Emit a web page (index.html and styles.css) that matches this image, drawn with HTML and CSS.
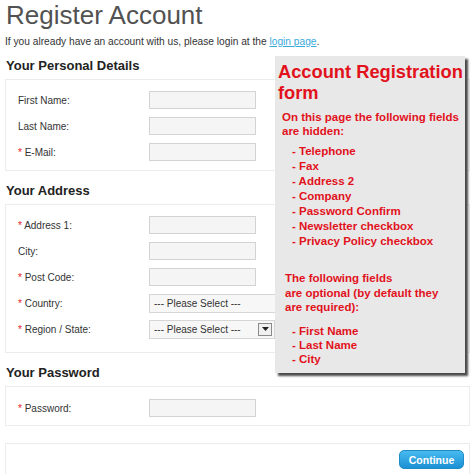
FILE: index.html
```html
<!DOCTYPE html>
<html>
<head>
<meta charset="utf-8">
<title>Register Account</title>
<link rel="stylesheet" href="styles.css">
</head>
<body>
<div class="page">
  <h1 class="title">Register Account</h1>
  <p class="intro">If you already have an account with us, please login at the <a class="link" href="#">login page</a>.</p>

  <h2 class="section-title section-title--first">Your Personal Details</h2>
  <div class="box">
    <div class="row"><span class="label">First Name:</span><span class="field"></span></div>
    <div class="row"><span class="label">Last Name:</span><span class="field"></span></div>
    <div class="row"><span class="label"><span class="req">*</span> E-Mail:</span><span class="field"></span></div>
  </div>

  <h2 class="section-title">Your Address</h2>
  <div class="box box--address">
    <div class="row"><span class="label"><span class="req">*</span> Address 1:</span><span class="field"></span></div>
    <div class="row"><span class="label">City:</span><span class="field"></span></div>
    <div class="row"><span class="label"><span class="req">*</span> Post Code:</span><span class="field"></span></div>
    <div class="row"><span class="label"><span class="req">*</span> Country:</span><span class="select select--wide"><span class="select-text">--- Please Select ---</span></span></div>
    <div class="row"><span class="label"><span class="req">*</span> Region / State:</span><span class="select"><span class="select-text">--- Please Select ---</span><span class="select-arrow"><svg width="7" height="4" viewBox="0 0 7 4"><path d="M0 0 L7 0 L3.5 4 Z" fill="#222"/></svg></span></span></div>
  </div>

  <h2 class="section-title">Your Password</h2>
  <div class="box box--password">
    <div class="row"><span class="label"><span class="req">*</span> Password:</span><span class="field"></span></div>
  </div>

  <div class="box box--actions">
    <button class="btn" type="button">Continue</button>
  </div>

  <div class="note">
    <div class="note-title">Account Registration<br>form</div>
    <p class="note-text">On this page the following fields<br>are hidden:</p>
    <ul class="note-list">
      <li>- Telephone</li>
      <li>- Fax</li>
      <li>- Address 2</li>
      <li>- Company</li>
      <li>- Password Confirm</li>
      <li>- Newsletter checkbox</li>
      <li>- Privacy Policy checkbox</li>
    </ul>
    <p class="note-text note-text--second">The following fields<br>are optional (by default they<br>are required):</p>
    <ul class="note-list note-list--second">
      <li>- First Name</li>
      <li>- Last Name</li>
      <li>- City</li>
    </ul>
  </div>
</div>
</body>
</html>
```

FILE: styles.css
```css
html, body {
  margin: 0;
  padding: 0;
  background: #ffffff;
}

body {
  font-family: "Liberation Sans", Arial, sans-serif;
  color: #333333;
  overflow: hidden;
}

.page {
  position: relative;
  width: 465px;
  padding-left: 5px;
  height: 474px;
}

.title {
  margin: 0 0 0 1px;
  font-size: 26px;
  line-height: 30px;
  font-weight: normal;
  color: #525252;
}

.intro {
  margin: 5px 0 0 0;
  font-size: 10.2px;
  line-height: 14px;
  color: #333333;
}

.link {
  color: #3aa9dc;
  text-decoration: underline;
}

.section-title {
  margin: 12px 0 5px 1px;
  font-size: 13px;
  line-height: 16px;
  font-weight: bold;
  color: #222222;
}

.section-title--first {
  margin-top: 9px;
}

.box {
  border: 1px solid #ececec;
  padding: 7px 0 5px 11px;
}

.box--address {
  padding-bottom: 10px;
}

.box--password {
  padding-top: 8px;
  padding-bottom: 4px;
}

.box--actions {
  margin-top: 17px;
  padding: 6px 5px 12px 0;
  display: flex;
  justify-content: flex-end;
}

.row {
  display: flex;
  align-items: center;
  height: 26px;
}

.label {
  width: 131px;
  font-size: 10px;
  color: #333333;
  padding-left: 1px;
}

.req {
  color: #e31b1b;
}

.field {
  display: block;
  width: 105px;
  height: 16px;
  border: 1px solid #d3d3d3;
  background: #f5f5f5;
}

.select {
  display: flex;
  align-items: center;
  justify-content: space-between;
  box-sizing: border-box;
  width: 126px;
  height: 19px;
  border: 1px solid #d6d6d6;
  background: #f7f7f7;
  padding: 0 2px 0 4px;
}

.select--wide {
  width: 150px;
}

.select-text {
  font-size: 10px;
  color: #333333;
}

.select-arrow {
  display: flex;
  align-items: center;
  justify-content: center;
  width: 12px;
  height: 11px;
  border: 1px solid #8a8a8a;
  background: #f0f0f0;
}

.btn {
  width: 65px;
  height: 19px;
  border: 1px solid #1f8cc8;
  border-radius: 5px;
  background: linear-gradient(#47baf0, #1b91d4);
  color: #ffffff;
  font-family: "Liberation Sans", Arial, sans-serif;
  font-size: 10.5px;
  font-weight: bold;
  padding: 0;
}

.note {
  position: absolute;
  left: 275px;
  top: 56px;
  width: 190px;
  height: 317px;
  box-sizing: border-box;
  background: #e8e8e8;
  box-shadow: 3px 3px 2px #4a4a4a;
  padding: 5px 0 0 3px;
  color: #e2121c;
  font-weight: bold;
}

.note-title {
  font-size: 18.3px;
  line-height: 21px;
}

.note-text {
  margin: 7px 0 0 4px;
  font-size: 11.5px;
  line-height: 14px;
}

.note-text--second {
  margin: 22px 0 0 7px;
  line-height: 14.5px;
}

.note-list {
  list-style: none;
  margin: 6px 0 0 14px;
  padding: 0;
  font-size: 11.5px;
  line-height: 15px;
}

.note-list--second {
  margin: 9px 0 0 14px;
  line-height: 14px;
}
```
